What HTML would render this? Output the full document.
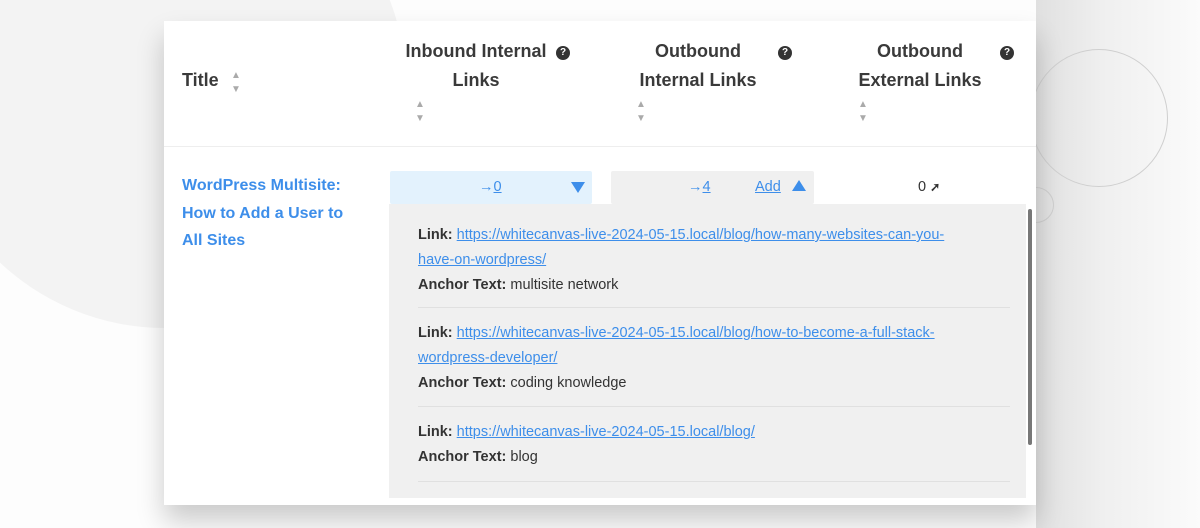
<!DOCTYPE html>
<html><head><meta charset="utf-8"><style>
*{margin:0;padding:0;box-sizing:border-box}
body{width:1200px;height:528px;overflow:hidden;position:relative;background:#fdfdfd;font-family:"Liberation Sans",Arial,sans-serif;color:#333}
.bgc{position:absolute;left:-76px;top:-154px;width:482px;height:482px;border-radius:50%;background:#f3f3f3}
.rg{position:absolute;left:1036px;top:0;width:164px;height:528px;background:linear-gradient(90deg,#e0e0e0,#efefef 40%,#fbfbfb)}
.c1{position:absolute;left:1030px;top:49px;width:138px;height:138px;border-radius:50%;border:1px solid #cfcfcf}
.c2{position:absolute;left:1018px;top:187px;width:36px;height:36px;border-radius:50%;border:1px solid #cfcfcf}
.card{position:absolute;left:164px;top:21px;width:872px;height:484px;background:#fff;box-shadow:0 16px 26px rgba(0,0,0,.2)}
.h{position:absolute;font-weight:bold;font-size:18px;color:#3a3a3a;text-align:center;line-height:29px}
.q{position:absolute;width:14px;height:14px;border-radius:50%;background:#333;color:#fff;font-size:10px;font-weight:bold;text-align:center;line-height:14px}
.s{position:absolute;font-size:10px;color:#aaa;line-height:14px}
.sep{position:absolute;left:164px;top:146px;width:872px;height:1px;background:#eee}
.t{position:absolute;left:182px;top:172px;color:#3d8eea;font-weight:bold;font-size:16px;line-height:27.5px}
a{color:#3d8eea;text-decoration:underline}
.panel{position:absolute;left:389px;top:204px;width:637px;height:294px;background:#f0f0f0}
.it{position:absolute;left:29px;font-size:14.5px;line-height:25px;white-space:nowrap}
.it b{color:#333}
.ln{position:absolute;left:29px;width:592px;height:1px;background:#e0e0e0}
.sb{position:absolute;left:1028px;top:209px;width:4px;height:236px;border-radius:2px;background:#777}
.ar{font-weight:bold}
</style></head><body>
<div class="bgc"></div><div class="rg"></div>
<div class="c1"></div><div class="c2"></div>
<div class="card"></div>
<div class="h" style="left:182px;top:66px">Title</div>
<div class="s" style="left:231px;top:69px">▲<br>▼</div>
<div class="h" style="left:400px;top:37px;width:152px">Inbound Internal<br>Links</div>
<div class="q" style="left:556px;top:46px">?</div>
<div class="s" style="left:415px;top:98px">▲<br>▼</div>
<div class="h" style="left:630px;top:37px;width:136px">Outbound<br>Internal Links</div>
<div class="q" style="left:778px;top:46px">?</div>
<div class="s" style="left:636px;top:98px">▲<br>▼</div>
<div class="h" style="left:852px;top:37px;width:136px">Outbound<br>External Links</div>
<div class="q" style="left:1000px;top:46px">?</div>
<div class="s" style="left:858px;top:98px">▲<br>▼</div>
<div class="sep"></div>
<div class="t">WordPress Multisite:<br>How to Add a User to<br>All Sites</div>
<div style="position:absolute;left:390px;top:171px;width:202px;height:33px;background:#e3f2fd;border-radius:2px"></div>
<div style="position:absolute;left:479px;top:179px;font-size:14.5px;color:#3d8eea"><span class="ar">→</span><a>0</a></div>
<div style="position:absolute;left:571px;top:182px;width:0;height:0;border-left:7px solid transparent;border-right:7px solid transparent;border-top:11px solid #3d8eea"></div>
<div style="position:absolute;left:611px;top:171px;width:203px;height:33px;background:#f0f0f0;border-radius:2px"></div>
<div style="position:absolute;left:688px;top:179px;font-size:14.5px;color:#3d8eea"><span class="ar">→</span><a>4</a></div>
<div style="position:absolute;left:755px;top:179px;font-size:14.5px"><a>Add</a></div>
<div style="position:absolute;left:792px;top:180px;width:0;height:0;border-left:7px solid transparent;border-right:7px solid transparent;border-bottom:11px solid #3d8eea"></div>
<div style="position:absolute;left:918px;top:179px;font-size:14.5px;color:#333">0 <span style="font-size:12px;font-weight:bold">➚</span></div>
<div class="panel">
<div class="it" style="top:19px"><b>Link:</b> <a>https://whitecanvas-live-2024-05-15.local/blog/how-many-websites-can-you-</a><br><a>have-on-wordpress/</a><br><b>Anchor Text:</b> multisite network</div>
<div class="ln" style="top:103px"></div>
<div class="it" style="top:117px"><b>Link:</b> <a>https://whitecanvas-live-2024-05-15.local/blog/how-to-become-a-full-stack-</a><br><a>wordpress-developer/</a><br><b>Anchor Text:</b> coding knowledge</div>
<div class="ln" style="top:202px"></div>
<div class="it" style="top:216px"><b>Link:</b> <a>https://whitecanvas-live-2024-05-15.local/blog/</a><br><b>Anchor Text:</b> blog</div>
<div class="ln" style="top:277px"></div>
</div>
<div class="sb"></div>
</body></html>
